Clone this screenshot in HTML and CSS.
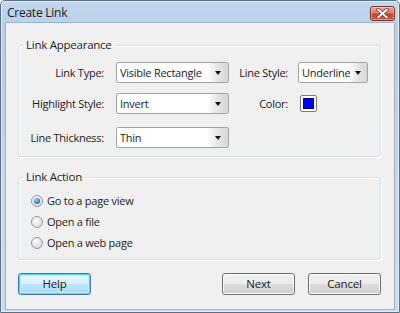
FILE: index.html
```html
<!DOCTYPE html>
<html>
<head>
<meta charset="utf-8">
<link rel="stylesheet" href="styles.css">
</head>
<body>
<div class="window">
  <div class="titlebar">
    <span class="title">Create Link</span>
    <span class="close"><svg width="13" height="11" viewBox="0 0 13 11"><path d="M2 1.5 L11 9.5 M11 1.5 L2 9.5" stroke="#6b2b24" stroke-width="3.4" stroke-linecap="round"/><path d="M2 1.5 L11 9.5 M11 1.5 L2 9.5" stroke="#fff" stroke-width="2" stroke-linecap="round"/></svg></span>
  </div>
  <div class="client">
    <fieldset class="group appearance">
      <legend>Link Appearance</legend>
      <div class="grid">
        <label class="lbl">Link Type:</label>
        <div class="select wide"><span class="val">Visible Rectangle</span><span class="arrow"></span></div>
        <label class="lbl lbl2">Line Style:</label>
        <div class="select narrow"><span class="val">Underline</span><span class="arrow"></span></div>

        <label class="lbl">Highlight Style:</label>
        <div class="select wide"><span class="val">Invert</span><span class="arrow"></span></div>
        <label class="lbl lbl2">Color:</label>
        <div class="swatchcell"><span class="swatch"><span class="swatch-in"></span></span></div>

        <label class="lbl">Line Thickness:</label>
        <div class="select wide"><span class="val">Thin</span><span class="arrow"></span></div>
      </div>
    </fieldset>
    <fieldset class="group action">
      <legend>Link Action</legend>
      <div class="radio-row"><span class="radio checked"></span><span>Go to a page view</span></div>
      <div class="radio-row"><span class="radio"></span><span>Open a file</span></div>
      <div class="radio-row"><span class="radio"></span><span>Open a web page</span></div>
    </fieldset>
    <div class="buttons">
      <button class="btn default">Help</button>
      <span class="spacer"></span>
      <button class="btn">Next</button>
      <button class="btn">Cancel</button>
    </div>
  </div>
</div>
</body>
</html>
```
FILE: styles.css
```css
html, body {
  margin: 0;
  padding: 0;
  background: #ffffff;
}
body {
  font-family: "Open Sans", "Noto Sans", sans-serif;
  font-size: 11px;
  letter-spacing: -0.25px;
  color: #1b1b1b;
}
.window {
  width: 400px;
  height: 313px;
  box-sizing: border-box;
  border: 1px solid #5c6f86;
  border-radius: 5px 5px 0 0;
  background: linear-gradient(to bottom, #c2d7ee 0%, #b8cfe8 10%, #c4d8ee 60%, #c9dcf0 100%);
  padding: 0 4px 3px 4px;
  display: flex;
  flex-direction: column;
  box-shadow: inset 0 0 0 1px #e6eff9;
}
.titlebar {
  height: 21px;
  display: flex;
  align-items: center;
  padding-left: 2px;
  flex: none;
}
.title {
  font-size: 12px;
  color: #1a1a1a;
  flex: 1;
  padding-top: 1px;
}
.close {
  width: 25px;
  height: 15px;
  margin-top: 3px;
  box-sizing: border-box;
  border: 1px solid #7c352c;
  border-radius: 3px;
  background: linear-gradient(to bottom, #e9a99c 0%, #da7d6e 45%, #c7412f 55%, #d4614e 100%);
  display: flex;
  align-items: center;
  justify-content: center;
  box-shadow: inset 0 0 0 1px rgba(255,255,255,0.35);
}
.close svg { display: block; }
.client {
  flex: 1;
  background: #f0f0f0;
  border: 1px solid #9fb4cc;
  padding: 14px 13px 14px 12px;
  display: flex;
  flex-direction: column;
}
.group {
  margin: 0;
  padding: 0;
  border: 1px solid #d5dfe5;
  border-radius: 3px;
  box-shadow: inset 1px 1px 0 #ffffff, 1px 1px 0 #ffffff;
  min-width: 0;
}
.group legend {
  margin-left: 4px;
  padding: 0 3px;
  line-height: 16px;
  height: 16px;
  font-size: 11.5px;
  color: #1b1b1b;
}
.appearance {
  padding: 9px 0 11px 0;
}
.grid {
  display: grid;
  grid-template-columns: 97px 113px 69px 70px;
  grid-template-rows: 21px 21px 21px;
  row-gap: 10px;
  align-items: center;
}
.lbl {
  text-align: right;
  padding-right: 12px;
  white-space: nowrap;
}
.lbl2 {
  padding-right: 10px;
}
.grid > .lbl:nth-child(9),
.grid > .select:nth-child(10) {
  position: relative;
  top: 3px;
}
.select {
  height: 21px;
  box-sizing: border-box;
  border: 1px solid #a4a4a4;
  border-radius: 2px;
  background: #ffffff;
  display: flex;
  align-items: center;
  overflow: hidden;
}
.select .val {
  flex: 1;
  padding-left: 3px;
  white-space: nowrap;
  overflow: hidden;
}
.select .arrow {
  width: 19px;
  height: 100%;
  flex: none;
  background: linear-gradient(to right, #fafafa 0%, #e8e8e8 40%, #d6d6d6 100%);
  position: relative;
}
.select.narrow .arrow {
  width: 17px;
}
.select .arrow::after {
  content: "";
  position: absolute;
  left: 6px;
  top: 8px;
  border-left: 3.5px solid transparent;
  border-right: 3.5px solid transparent;
  border-top: 4px solid #111;
}
.select.narrow .arrow::after {
  left: 5px;
}
.swatchcell {
  display: flex;
  align-items: center;
  padding-left: 2px;
}
.swatch {
  width: 17px;
  height: 17px;
  box-sizing: border-box;
  border: 1px solid #7b7b7b;
  border-radius: 2px;
  background: #ffffff;
  padding: 2px;
  display: block;
}
.swatch-in {
  display: block;
  width: 100%;
  height: 100%;
  box-sizing: border-box;
  background: #0000ff;
  border: 1px solid #00007a;
}
.action {
  margin-top: 12px;
  padding: 5px 0 6px 0;
}
.radio-row {
  height: 21px;
  display: flex;
  align-items: center;
  gap: 4px;
  margin-left: 12px;
}
.radio {
  width: 12px;
  height: 12px;
  box-sizing: border-box;
  border-radius: 50%;
  border: 1px solid #8e9aa6;
  background: radial-gradient(circle at 40% 35%, #ffffff 0%, #e3e3e3 60%, #cfcfcf 100%);
  position: relative;
  flex: none;
}
.radio.checked::after {
  content: "";
  position: absolute;
  left: 2px;
  top: 2px;
  width: 6px;
  height: 6px;
  border-radius: 50%;
  background: radial-gradient(circle at 40% 35%, #a8d1f4 0%, #3d80c0 55%, #1f4f86 100%);
}
.buttons {
  margin-top: 13px;
  display: flex;
  gap: 13px;
}
.spacer { flex: 1; }
.btn {
  width: 73px;
  height: 22px;
  box-sizing: border-box;
  border: 1px solid #707070;
  border-radius: 3px;
  background: linear-gradient(to bottom, #f2f2f2 0%, #ebebeb 49%, #dddddd 50%, #cfcfcf 100%);
  box-shadow: inset 0 0 0 1px #fbfbfb;
  font-family: "Open Sans", "Noto Sans", sans-serif;
  font-size: 11.5px;
  letter-spacing: -0.2px;
  color: #1b1b1b;
  padding: 0;
  line-height: 18px;
}
.btn.default {
  border-color: #3c7fb1;
  box-shadow: inset 0 0 0 1px #48d5fd, inset 0 0 0 2px #c5ecfb;
  background: linear-gradient(to bottom, #eaf6fd 0%, #d9f0fc 49%, #bee6fd 50%, #a7d9f5 100%);
}
```
